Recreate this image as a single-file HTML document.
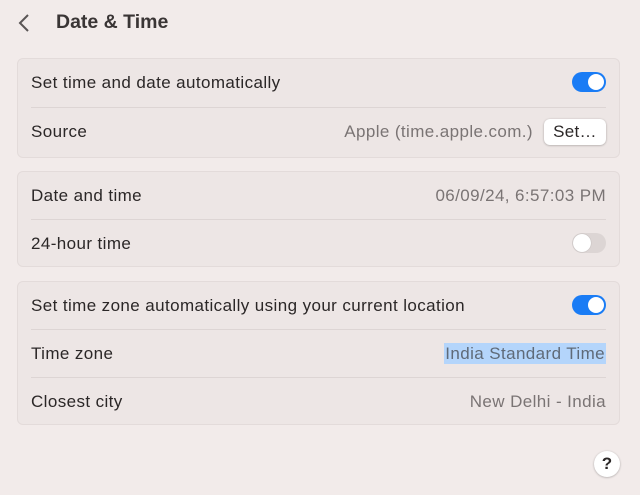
<!DOCTYPE html>
<html><head><style>
*{margin:0;padding:0;box-sizing:border-box}
body{width:640px;height:495px;background:#f2ebea;font-family:"Liberation Sans",sans-serif;color:#2b2727;position:relative;overflow:hidden}
.title{position:absolute;left:56px;top:11px;font-size:19.5px;font-weight:bold;color:#3a3535}
.panel{position:absolute;left:17px;width:603px;background:#ede6e5;border:1px solid #e3dbda;border-radius:6px}
.row{position:absolute;left:13px;right:13px;height:49px;font-size:17px;letter-spacing:0.4px;line-height:47px}
.row.sep{border-top:1px solid #ddd5d4}
.val{position:absolute;right:0;top:0;color:#7a7474}
.tog{position:absolute;right:0;top:13px;width:34px;height:20px;border-radius:10px;background:#1a7cf5}
.tog::after{content:"";position:absolute;right:2px;top:2px;width:16px;height:16px;border-radius:50%;background:#fff}
.tog.off{background:#dcd5d4}
.tog.off::after{right:auto;left:1px;top:1px;width:18px;height:18px;box-shadow:0 0 1px rgba(0,0,0,.3)}
.btn{position:absolute;right:0;top:11px;width:62px;height:26px;background:#fff;border-radius:6px;box-shadow:0 0.5px 2px rgba(0,0,0,.3);font-size:17px;line-height:26px;text-align:center;color:#2b2727;letter-spacing:0.3px}
</style></head><body>
<svg style="position:absolute;left:17px;top:13px" width="14" height="20"><path d="M11 2 L3 10 L11 18" stroke="#5a5555" stroke-width="2" fill="none"/></svg>
<div class="title">Date &amp; Time</div>

<div class="panel" style="top:58px;height:100px">
 <div class="row" style="top:0">Set time and date automatically<div class="tog"></div></div>
 <div class="row sep" style="top:48px">Source<span class="val" style="right:73px">Apple (time.apple.com.)</span><div class="btn">Set…</div></div>
</div>

<div class="panel" style="top:171px;height:96px">
 <div class="row" style="top:0">Date and time<span class="val">06/09/24, 6:57:03 PM</span></div>
 <div class="row sep" style="top:47px">24-hour time<div class="tog off"></div></div>
</div>

<div class="panel" style="top:281px;height:144px">
 <div class="row" style="top:0">Set time zone automatically using your current location<div class="tog"></div></div>
 <div class="row sep" style="top:47px">Time zone<span class="val" style="top:13px;line-height:21px;background:#b4d5fb;color:#5f6a78;padding:0 1px">India Standard Time</span></div>
 <div class="row sep" style="top:95px">Closest city<span class="val">New Delhi - India</span></div>
</div>

<div style="position:absolute;left:594px;top:451px;width:26px;height:26px;border-radius:50%;background:#fff;box-shadow:0 0.5px 2px rgba(0,0,0,.3);text-align:center;line-height:26px;font-size:17px;font-weight:bold;color:#2b2727">?</div>
</body></html>
